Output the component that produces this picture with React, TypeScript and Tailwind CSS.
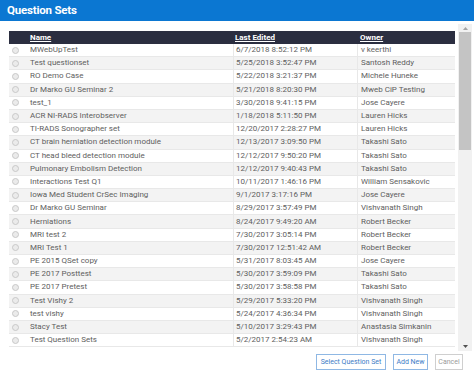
import React from "react";

const rows: [string, string, string][] = [
  ["MWebUpTest", "6/7/2018 8:52:12 PM", "v keerthi"],
  ["Test questionset", "5/25/2018 3:52:47 PM", "Santosh Reddy"],
  ["RO Demo Case", "5/22/2018 3:21:37 PM", "Michele Huneke"],
  ["Dr Marko GU Seminar 2", "5/21/2018 8:20:30 PM", "Mweb CiP Testing"],
  ["test_1", "3/30/2018 9:41:15 PM", "Jose Cayere"],
  ["ACR NI-RADS Interobserver", "1/18/2018 5:11:50 PM", "Lauren Hicks"],
  ["TI-RADS Sonographer set", "12/20/2017 2:28:27 PM", "Lauren Hicks"],
  ["CT brain herniation detection module", "12/13/2017 3:09:50 PM", "Takashi Sato"],
  ["CT head bleed detection module", "12/12/2017 9:50:20 PM", "Takashi Sato"],
  ["Pulmonary Embolism Detection", "12/12/2017 9:40:43 PM", "Takashi Sato"],
  ["Interactions Test Q1", "10/11/2017 1:46:16 PM", "William Sensakovic"],
  ["Iowa Med Student CrSec Imaging", "9/1/2017 3:17:16 PM", "Jose Cayere"],
  ["Dr Marko GU Seminar", "8/29/2017 3:57:49 PM", "Vishvanath Singh"],
  ["Herniations", "8/24/2017 9:49:20 AM", "Robert Becker"],
  ["MRI test 2", "7/30/2017 3:05:14 PM", "Robert Becker"],
  ["MRI Test 1", "7/30/2017 12:51:42 AM", "Robert Becker"],
  ["PE 2015 QSet copy", "5/31/2017 8:03:45 AM", "Jose Cayere"],
  ["PE 2017 Posttest", "5/30/2017 3:59:09 PM", "Takashi Sato"],
  ["PE 2017 Pretest", "5/30/2017 3:58:58 PM", "Takashi Sato"],
  ["Test Vishy 2", "5/29/2017 5:33:20 PM", "Vishvanath Singh"],
  ["test vishy", "5/24/2017 4:36:34 PM", "Vishvanath Singh"],
  ["Stacy Test", "5/10/2017 3:29:43 PM", "Anastasia Simkanin"],
  ["Test Question Sets", "5/2/2017 2:54:23 AM", "Vishvanath Singh"],
];

const Radio = () => (
  <span className="block w-[7px] h-[7px] rounded-full border border-[#c8c8c8] bg-[#ebebeb]" />
);

export default function App() {
  return (
    <div
      className="w-[474px] h-[376px] bg-white flex flex-col overflow-hidden"
      style={{ fontFamily: "Roboto, 'Liberation Sans', sans-serif" }}
    >
      <div className="h-[21px] bg-[#0b77d2] flex items-center px-[7px]">
        <span className="text-white font-bold text-[11.5px] tracking-[-0.2px]">Question Sets</span>
      </div>

      <div className="flex h-[327px] mt-[3px]">
        <div className="flex-1 pl-[9px] pr-[3px] pt-[7px]">
          <div className="w-[446px] text-[8px] text-[#5e5e5e]">
            <div className="h-[13px] bg-[#2b2e40] text-white font-bold flex items-center">
              <div className="w-[21px] shrink-0" />
              <div className="w-[203px] shrink-0 underline">Name</div>
              <div className="w-[124px] shrink-0 underline pl-[2px]">Last Edited</div>
              <div className="flex-1 underline pl-[3px]">Owner</div>
            </div>
            {rows.map((r, i) => (
              <div
                key={i}
                className={`h-[13.2px] flex items-stretch border-b border-[#e8e8e8] ${i % 2 ? "bg-[#f3f3f3]" : "bg-white"}`}
              >
                <div className="w-[21px] shrink-0 pl-[3px] flex items-center">
                  <Radio />
                </div>
                <div className="w-[203px] shrink-0 whitespace-nowrap flex items-center">{r[0]}</div>
                <div className="w-[124px] shrink-0 whitespace-nowrap pl-[2px] border-l border-[#e8e8e8] flex items-center">{r[1]}</div>
                <div className="flex-1 whitespace-nowrap pl-[3px] border-l border-[#e8e8e8] flex items-center">{r[2]}</div>
              </div>
            ))}
          </div>
        </div>

        <div className="w-[14px] mr-[2px] bg-[#f1f1f1] flex flex-col items-center">
          <div className="h-[8px] flex items-center justify-center">
            <svg width="5" height="3" viewBox="0 0 5 3">
              <path d="M0 3 L2.5 0 L5 3 Z" fill="#a3a3a3" />
            </svg>
          </div>
          <div className="w-[12px] h-[118px] bg-[#c4c4c4]" />
          <div className="flex-1" />
          <div className="h-[10px] flex items-center justify-center">
            <svg width="5" height="3" viewBox="0 0 5 3">
              <path d="M0 0 L5 0 L2.5 3 Z" fill="#505050" />
            </svg>
          </div>
        </div>
      </div>

      <div className="flex justify-end gap-[7px] pr-[11px] mt-[3px]">
        <button className="h-[16px] w-[70px] border border-[#8fb8e4] text-[#3c7cc6] text-[7px] bg-white">
          Select Question Set
        </button>
        <button className="h-[16px] w-[35px] border border-[#8fb8e4] text-[#3c7cc6] text-[7px] bg-white">
          Add New
        </button>
        <button className="h-[16px] w-[28px] border border-[#cfcfcf] text-[#9a9a9a] text-[7px] bg-white">
          Cancel
        </button>
      </div>
    </div>
  );
}
